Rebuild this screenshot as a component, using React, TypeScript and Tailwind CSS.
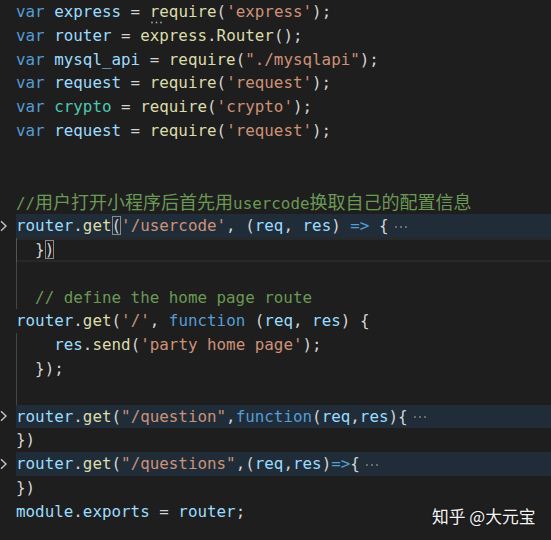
import React from "react";

type P = { children?: React.ReactNode };

const Kw = ({ children }: P) => <span className="text-[#569cd6]">{children}</span>;
const V = ({ children }: P) => <span className="text-[#9cdcfe]">{children}</span>;
const F = ({ children }: P) => <span className="text-[#dcdcaa]">{children}</span>;
const S = ({ children }: P) => <span className="text-[#ce9178]">{children}</span>;
const Cm = ({ children }: P) => <span className="text-[#6a9955]">{children}</span>;
const Ty = ({ children }: P) => <span className="text-[#4ec9b0]">{children}</span>;
const Cj = ({ children }: P) => (
  <span className="text-[18px] font-['Noto_Sans_CJK_SC',sans-serif]">{children}</span>
);
const Box = ({ children }: P) => (
  <span className="outline outline-1 -outline-offset-1 outline-[#8a8a8a]">{children}</span>
);

const Chevron = () => (
  <svg width="8" height="12" viewBox="0 0 8 12">
    <path d="M1 1.2 L6 6 L1 10.8" fill="none" stroke="#c5c5c5" strokeWidth="1.4" />
  </svg>
);

const FoldDots = () => (
  <svg width="16" height="8" viewBox="0 0 16 8" className="inline-block ml-[5px] align-middle">
    <circle cx="2" cy="4" r="0.9" fill="#8a8a8a" />
    <circle cx="7" cy="4" r="0.9" fill="#8a8a8a" />
    <circle cx="12" cy="4" r="0.9" fill="#8a8a8a" />
  </svg>
);

const HintR = () => (
  <span className="relative">
    r
    <svg width="14" height="3" viewBox="0 0 14 3" className="absolute left-0 top-[18.5px]">
      <circle cx="2" cy="1.5" r="0.9" fill="#a0a0a0" />
      <circle cx="6.5" cy="1.5" r="0.9" fill="#a0a0a0" />
      <circle cx="11" cy="1.5" r="0.9" fill="#a0a0a0" />
    </svg>
  </span>
);

type LineProps = {
  children?: React.ReactNode;
  kind?: "plain" | "folded" | "current" | "guide";
  chevron?: boolean;
};

function Line({ children, kind = "plain", chevron }: LineProps) {
  const cls =
    kind === "folded"
      ? "bg-[#202d39]"
      : kind === "current"
      ? "shadow-[inset_1px_0_0_#555555,inset_0_2px_0_#282828,inset_0_-2px_0_#282828]"
      : kind === "guide"
      ? "shadow-[inset_1px_0_0_#454545]"
      : "";
  return (
    <div className="flex h-[23.8px]">
      <div className="w-[16px] shrink-0 flex items-center">{chevron && <Chevron />}</div>
      <div className={`flex-1 whitespace-pre ${cls}`}>{children}</div>
    </div>
  );
}

export default function App() {
  return (
    <div className="relative w-[551px] h-[540px] overflow-hidden bg-[#1e1e1e] text-[#d4d4d4] font-['DejaVu_Sans_Mono','Noto_Sans_CJK_SC',monospace] text-[15.86px] leading-[23.8px]">
      <Line>
        <Kw>var</Kw> <V>express</V> = <F><HintR />equire</F>(<S>'express'</S>);
      </Line>
      <Line>
        <Kw>var</Kw> <V>router</V> = <F>express</F>.<F>Router</F>();
      </Line>
      <Line>
        <Kw>var</Kw> <V>mysql_api</V> = <F>require</F>(<S>"./mysqlapi"</S>);
      </Line>
      <Line>
        <Kw>var</Kw> <V>request</V> = <F>require</F>(<S>'request'</S>);
      </Line>
      <Line>
        <Kw>var</Kw> <Ty>crypto</Ty> = <F>require</F>(<S>'crypto'</S>);
      </Line>
      <Line>
        <Kw>var</Kw> <V>request</V> = <F>require</F>(<S>'request'</S>);
      </Line>
      <Line />
      <Line />
      <Line>
        <Cm>
          //<Cj>用户打开小程序后首先用</Cj>usercode<Cj>换取自己的配置信息</Cj>
        </Cm>
      </Line>
      <Line kind="folded" chevron>
        <V>router</V>.<F>get</F>
        <Box>(</Box>
        <S>'/usercode'</S>, (<V>req</V>, <V>res</V>) <Kw>=&gt;</Kw> {"{"}
        <FoldDots />
      </Line>
      <Line kind="current">
        {"  }"}
        <Box>)</Box>
      </Line>
      <Line kind="guide" />
      <Line kind="guide">
        {"  "}
        <Cm>// define the home page route</Cm>
      </Line>
      <Line>
        <V>router</V>.<F>get</F>(<S>'/'</S>, <Kw>function</Kw> (<V>req</V>, <V>res</V>) {"{"}
      </Line>
      <Line kind="guide">
        {"    "}
        <V>res</V>.<F>send</F>(<S>'party home page'</S>);
      </Line>
      <Line kind="guide">{"  });"}</Line>
      <Line kind="guide" />
      <Line kind="folded" chevron>
        <V>router</V>.<F>get</F>(<S>"/question"</S>,<Kw>function</Kw>(<V>req</V>,<V>res</V>){"{"}
        <FoldDots />
      </Line>
      <Line>{"})"}</Line>
      <Line kind="folded" chevron>
        <V>router</V>.<F>get</F>(<S>"/questions"</S>,(<V>req</V>,<V>res</V>)<Kw>=&gt;</Kw>{"{"}
        <FoldDots />
      </Line>
      <Line>{"})"}</Line>
      <Line>
        <V>module</V>.<V>exports</V> = <V>router</V>;
      </Line>

      <div className="absolute left-[432px] top-[504px] text-[16.8px] leading-[24px] text-[#f4f4f4] font-['Noto_Sans_CJK_SC',sans-serif] [text-shadow:0_0_2px_rgba(0,0,0,0.6)] whitespace-pre">
        知乎 @大元宝
      </div>
    </div>
  );
}
